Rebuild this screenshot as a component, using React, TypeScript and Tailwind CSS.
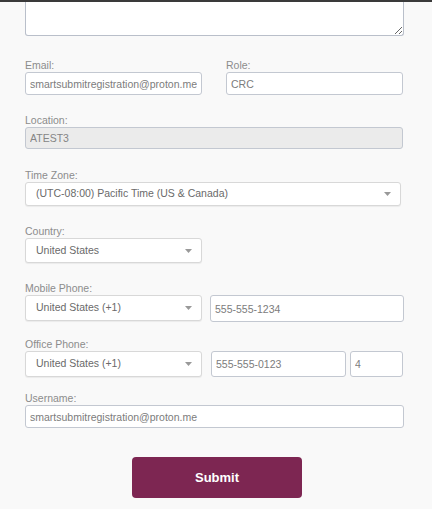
import type { ReactNode } from 'react';

const font = { fontFamily: '"Liberation Sans", Arial, sans-serif' };

function Label({ children }: { children: ReactNode }) {
  return (
    <div className="h-[14px] text-[10.5px] leading-[14px] text-[#8c8c8c]">
      {children}
    </div>
  );
}

function TextInput({
  value,
  className = '',
  disabled = false,
}: {
  value: string;
  className?: string;
  disabled?: boolean;
}) {
  return (
    <input
      readOnly
      value={value}
      className={`block rounded-[3px] border px-[4px] text-[10.5px] outline-none ${
        disabled
          ? 'border-[#c3c8d1] bg-[#ebebeb] text-[#858585]'
          : 'border-[#c3c8d1] bg-white text-[#7c7c7c]'
      } ${className}`}
    />
  );
}

function SelectBox({ value, className = '' }: { value: string; className?: string }) {
  return (
    <div
      className={`flex items-center justify-between rounded-[3px] border border-[#d8d8d8] bg-white pl-[10px] pr-[10px] text-[10.5px] text-[#6a6a6a] shadow-[0_1px_1px_rgba(0,0,0,0.06)] ${className}`}
    >
      <span>{value}</span>
      <svg width="7" height="4" viewBox="0 0 7 4" className="mr-[-1px]">
        <path d="M0 0h7L3.5 4z" fill="#999999" />
      </svg>
    </div>
  );
}

export default function App() {
  return (
    <div
      className="min-h-[509px] w-[432px] border-t-2 border-[#3a3a3a] bg-[#f9f9f9] pl-[25px] pr-[28px]"
      style={font}
    >
      <textarea
        readOnly
        className="block h-[34px] w-[379px] rounded-b-[3px] border border-t-0 border-[#b9bfca] bg-white"
      />

      <div className="mt-[22px] grid grid-cols-[177px_177px] gap-x-[24px]">
        <div>
          <Label>Email:</Label>
          <TextInput value="smartsubmitregistration@proton.me" className="h-[23px] w-[177px]" />
        </div>
        <div>
          <Label>Role:</Label>
          <TextInput value="CRC" className="h-[23px] w-[177px]" />
        </div>
      </div>

      <div className="mt-[18px]">
        <Label>Location:</Label>
        <TextInput value="ATEST3" disabled className="h-[22px] w-[378px]" />
      </div>

      <div className="mt-[19px]">
        <Label>Time Zone:</Label>
        <SelectBox value="(UTC-08:00) Pacific Time (US & Canada)" className="h-[24px] w-[376px]" />
      </div>

      <div className="mt-[18px]">
        <Label>Country:</Label>
        <SelectBox value="United States" className="h-[25px] w-[177px]" />
      </div>

      <div className="mt-[18px]">
        <Label>Mobile Phone:</Label>
        <div className="flex gap-[8px]">
          <SelectBox value="United States (+1)" className="h-[26px] w-[177px]" />
          <TextInput value="555-555-1234" className="h-[27px] w-[194px]" />
        </div>
      </div>

      <div className="mt-[15px]">
        <Label>Office Phone:</Label>
        <div className="flex">
          <SelectBox value="United States (+1)" className="h-[26px] w-[177px]" />
          <TextInput value="555-555-0123" className="ml-[9px] h-[26px] w-[135px]" />
          <TextInput value="4" className="ml-[4px] h-[26px] w-[53px]" />
        </div>
      </div>

      <div className="mt-[14px]">
        <Label>Username:</Label>
        <TextInput value="smartsubmitregistration@proton.me" className="h-[23px] w-[379px]" />
      </div>

      <div className="mt-[29px] pl-[107px]">
        <button className="h-[41px] w-[170px] rounded-[4px] bg-[#7d2652] text-[13px] font-bold text-white">
          Submit
        </button>
      </div>
    </div>
  );
}
